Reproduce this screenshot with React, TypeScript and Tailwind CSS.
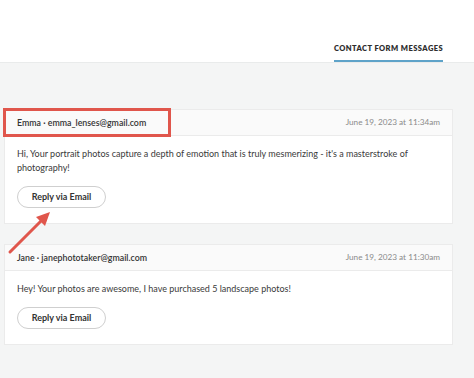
import React from "react";

type Msg = {
  name: string;
  email: string;
  date: string;
  body: string;
};

const messages: Msg[] = [
  {
    name: "Emma",
    email: "emma_lenses@gmail.com",
    date: "June 19, 2023 at 11:34am",
    body: "Hi, Your portrait photos capture a depth of emotion that is truly mesmerizing - it's a masterstroke of photography!",
  },
  {
    name: "Jane",
    email: "janephototaker@gmail.com",
    date: "June 19, 2023 at 11:30am",
    body: "Hey! Your photos are awesome, I have purchased 5 landscape photos!",
  },
];

function MessageCard({ m }: { m: Msg }) {
  return (
    <div className="border border-[#ebebeb] bg-white">
      <div className="h-[26px] flex items-center justify-between px-[12px] bg-[#fafafa] border-b border-[#ebebeb]">
        <div className="text-[8.8px] font-semibold text-[#333]">
          {m.name} · {m.email}
        </div>
        <div className="text-[8.2px] text-[#8a8a8a]">{m.date}</div>
      </div>
      <div className="px-[12px] pt-[11px] pb-[15px]">
        <p className="text-[9px] leading-[14px] text-[#3a3a3a] pr-[20px]">
          {m.body}
        </p>
        <button
          type="button"
          className="mt-[11px] w-[89px] h-[22px] rounded-full border border-[#cfcfcf] bg-white text-[9px] font-bold text-[#333]"
        >
          Reply via Email
        </button>
      </div>
    </div>
  );
}

export default function App() {
  return (
    <div className="relative w-[474px] h-[378px] overflow-hidden bg-[#f4f5f5] font-['Lato',sans-serif]">
      {/* tabs */}
      <div className="h-[63px] bg-white border-b border-[#e9ebeb] flex items-end justify-end pr-[31px]">
        <div className="w-[109px] h-[18px] whitespace-nowrap flex items-start justify-center border-b-2 border-[#5ea3c9] text-[7.5px] leading-[10px] font-extrabold tracking-[0.06em] text-[#2e2e2e]">
          CONTACT FORM MESSAGES
        </div>
      </div>

      {/* list */}
      <div className="pl-[4px] pr-[21px] pt-[46px] flex flex-col gap-[20px]">
        {messages.map((m) => (
          <MessageCard key={m.email} m={m} />
        ))}
      </div>

      {/* annotation */}
      <div className="absolute left-[3px] top-[108px] w-[168px] h-[29px] border-[3px] border-[#e0564c]" />
      <svg
        className="absolute left-0 top-[205px]"
        width="60"
        height="52"
        viewBox="0 0 60 52"
      >
        <line x1="10" y1="47" x2="44" y2="13" stroke="#e0564c" strokeWidth="3" strokeLinecap="round" />
        <polygon points="50,7 36,12 45,21" fill="#e0564c" />
      </svg>
    </div>
  );
}
